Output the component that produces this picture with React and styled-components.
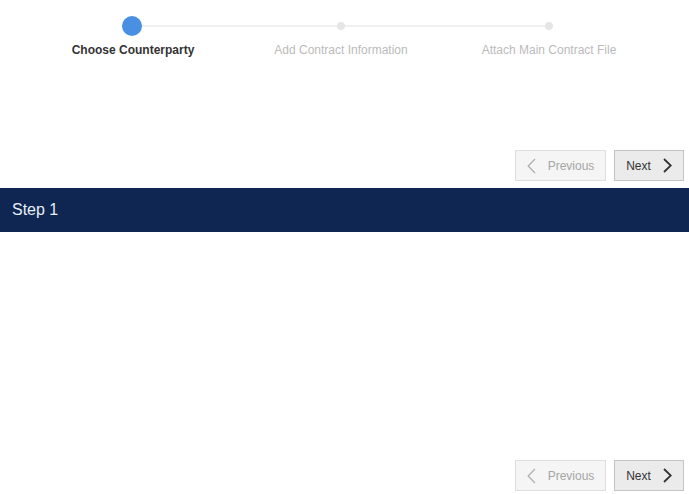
import React from "react";
import styled, { createGlobalStyle } from "styled-components";

const Global = createGlobalStyle`
  html, body { margin: 0; padding: 0; background: #fff; }
  body { font-family: "Liberation Sans", Arial, sans-serif; }
  * { box-sizing: border-box; }
`;

const Page = styled.div`
  width: 689px;
  display: flex;
  flex-direction: column;
`;

const Stepper = styled.div`
  position: relative;
  display: grid;
  grid-template-columns: repeat(3, 208px);
  margin-left: 29px;
  padding-top: 16px;
`;

const Track = styled.div`
  position: absolute;
  top: 25px;
  left: 104px;
  width: 416px;
  height: 2px;
  background: #f0f0f0;
`;

const Step = styled.div`
  position: relative;
  display: flex;
  flex-direction: column;
  align-items: center;
`;

const IconSlot = styled.div`
  height: 20px;
  display: flex;
  align-items: center;
  justify-content: center;
`;

const Dot = styled.div`
  width: ${(p) => (p.$active ? 20 : 8)}px;
  height: ${(p) => (p.$active ? 20 : 8)}px;
  border-radius: 50%;
  background: ${(p) => (p.$active ? "#4a90e2" : "#e6e6e6")};
  margin-left: ${(p) => (p.$active ? -2 : 0)}px;
`;

const Label = styled.div`
  margin-top: 6px;
  font-size: 12px;
  line-height: 16px;
  white-space: nowrap;
  font-weight: ${(p) => (p.$active ? 700 : 400)};
  color: ${(p) => (p.$active ? "#333" : "#bbb")};
`;

const ButtonRow = styled.div`
  display: flex;
  justify-content: flex-end;
  gap: 8px;
  padding-right: 5px;
  margin-top: ${(p) => p.$top}px;
  margin-bottom: ${(p) => p.$bottom}px;
`;

const NavButton = styled.button`
  height: 31px;
  width: ${(p) => p.$w}px;
  display: flex;
  align-items: center;
  justify-content: center;
  gap: ${(p) => p.$gap}px;
  padding: 0;
  font-family: "Liberation Sans", Arial, sans-serif;
  font-size: 12px;
  border: 1px solid ${(p) => (p.$disabled ? "#dedede" : "#c4c4c4")};
  background: ${(p) => (p.$disabled ? "#f5f5f5" : "#ebebeb")};
  color: ${(p) => (p.$disabled ? "#a5a5a5" : "#333")};
  cursor: ${(p) => (p.$disabled ? "default" : "pointer")};
`;

const Bar = styled.div`
  height: 44px;
  background: #0e2651;
  color: #e8eefa;
  display: flex;
  align-items: center;
  padding-left: 12px;
  font-size: 16px;
`;

const Content = styled.div`
  height: 228px;
`;

const ChevLeft = ({ color }) => (
  <svg width="9" height="16" viewBox="0 0 9 16">
    <path d="M8 1 L1.2 8 L8 15" fill="none" stroke={color} strokeWidth="1.3" />
  </svg>
);
const ChevRight = ({ color }) => (
  <svg width="9" height="15" viewBox="0 0 9 15">
    <path d="M1 1 L7.8 7.5 L1 14" fill="none" stroke={color} strokeWidth="1.8" />
  </svg>
);

const steps = ["Choose Counterparty", "Add Contract Information", "Attach Main Contract File"];

const Nav = ({ top, bottom }) => (
  <ButtonRow $top={top} $bottom={bottom}>
    <NavButton $w={91} $gap={12} $disabled>
      <ChevLeft color="#b0b0b0" />
      <span>Previous</span>
    </NavButton>
    <NavButton $w={70} $gap={12}>
      <span>Next</span>
      <ChevRight color="#333" />
    </NavButton>
  </ButtonRow>
);

export default function App() {
  return (
    <Page>
      <Global />
      <Stepper>
        <Track />
        {steps.map((s, i) => (
          <Step key={s}>
            <IconSlot>
              <Dot $active={i === 0} />
            </IconSlot>
            <Label $active={i === 0}>{s}</Label>
          </Step>
        ))}
      </Stepper>
      <Nav top={92} bottom={7} />
      <Bar>Step 1</Bar>
      <Content />
      <Nav top={0} bottom={3} />
    </Page>
  );
}
